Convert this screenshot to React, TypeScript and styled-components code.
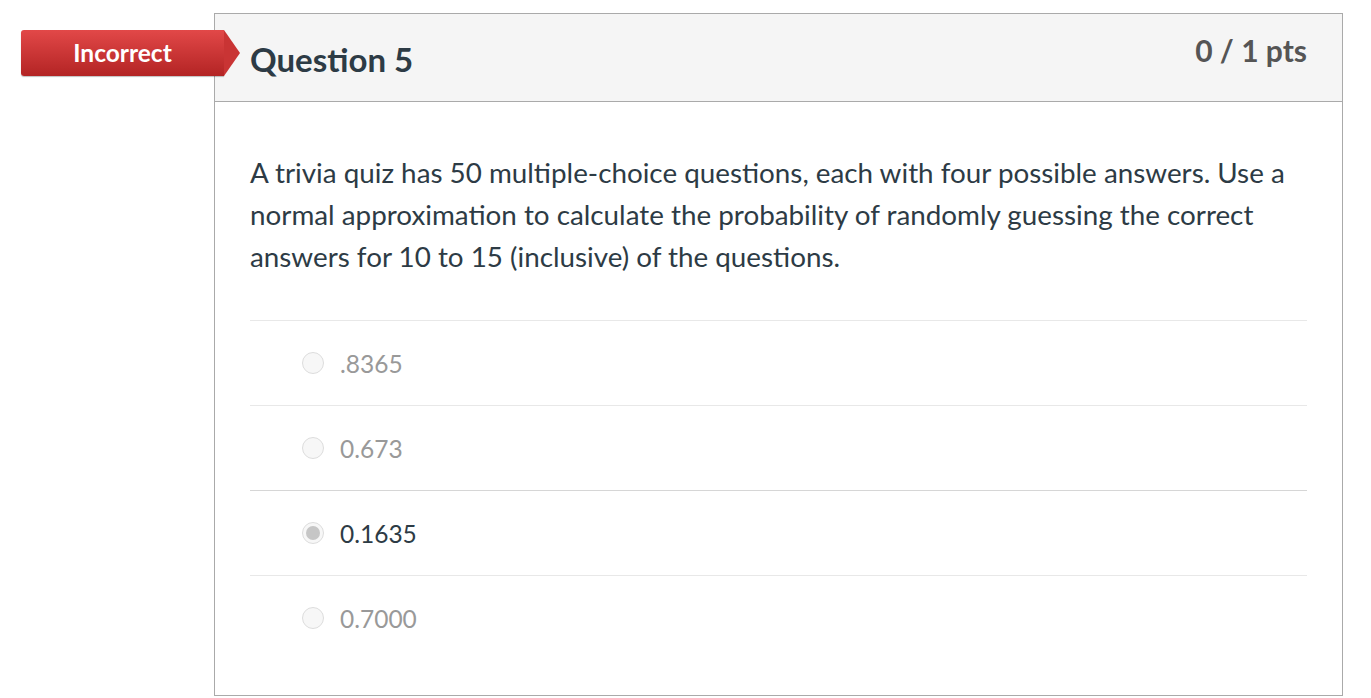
import React from "react";
import styled, {createGlobalStyle} from "styled-components";

const GlobalStyle = createGlobalStyle`
    body {
        margin: 0;
        background: #fff;
        font-family: Lato, "Open Sans", sans-serif;
    }
`;

const Page = styled.div`
    padding: 13px 0 0 214px;
`;

const Card = styled.div`
    position: relative;
    width: 1129px;
    height: 683px;
    box-sizing: border-box;
    border: 1px solid #aaa;
    background: #fff;
`;

const Header = styled.div`
    display: flex;
    justify-content: space-between;
    align-items: flex-start;
    height: 88px;
    box-sizing: border-box;
    padding: 0 35px 0 35px;
    background: #f5f5f5;
    border-bottom: 1px solid #aaa;
`;

const Title = styled.h2`
    margin: 25px 0 0 0;
    font-size: 33px;
    line-height: 40px;
    font-weight: 700;
    color: #2d3b45;
`;

const Points = styled.div`
    margin-top: 18px;
    font-size: 30px;
    line-height: 36px;
    font-weight: 700;
    color: #555;
`;

const Badge = styled.div`
    position: absolute;
    left: -194px;
    top: 16px;
    width: 203px;
    height: 46px;
    box-sizing: border-box;
    display: flex;
    align-items: center;
    justify-content: center;
    padding-bottom: 2px;
    background: linear-gradient(#e24848, #b32424);
    border-radius: 3px 0 0 3px;
    color: #fff;
    font-size: 24.5px;
    font-weight: 700;
    box-shadow: 0 1px 1px rgba(0, 0, 0, 0.25);

    &::after {
        content: "";
        position: absolute;
        right: -16px;
        top: 0;
        border-top: 23px solid transparent;
        border-bottom: 23px solid transparent;
        border-left: 16px solid #c93434;
    }
`;

const Body = styled.div`
    padding: 50px 35px 0 35px;
`;

const Text = styled.p`
    margin: 0 0 42px 0;
    font-size: 27.8px;
    line-height: 42px;
    color: #2d3b45;
`;

const AnswerRow = styled.div<{ $strong?: boolean }>`
    display: flex;
    align-items: center;
    gap: 16px;
    height: 84px;
    padding-left: 52px;
    border-top: 1px solid ${p => p.$strong ? "#d6d6d6" : "#e8e8e8"};
`;

const Radio = styled.span<{ $checked?: boolean }>`
    width: 22px;
    height: 22px;
    box-sizing: border-box;
    border-radius: 50%;
    border: 1px solid #ddd;
    background: #f7f7f7;
    display: flex;
    align-items: center;
    justify-content: center;

    &::after {
        content: "";
        display: ${p => p.$checked ? "block" : "none"};
        width: 14px;
        height: 14px;
        border-radius: 50%;
        background: #c6c6c6;
    }
`;

const AnswerText = styled.span<{ $checked?: boolean }>`
    font-size: 24.5px;
    color: ${p => p.$checked ? "#2d3b45" : "#999"};
`;

const answers = [
    {text: ".8365", checked: false},
    {text: "0.673", checked: false},
    {text: "0.1635", checked: true},
    {text: "0.7000", checked: false},
];

const App = () => {
    return (
        <Page>
            <GlobalStyle/>
            <Card>
                <Badge>Incorrect</Badge>
                <Header>
                    <Title>Question 5</Title>
                    <Points>0 / 1 pts</Points>
                </Header>
                <Body>
                    <Text>
                        A trivia quiz has 50 multiple-choice questions, each with four possible answers. Use a
                        normal approximation to calculate the probability of randomly guessing the correct
                        answers for 10 to 15 (inclusive) of the questions.
                    </Text>
                    {answers.map((a, i) => (
                        <AnswerRow key={a.text} $strong={i === 2}>
                            <Radio $checked={a.checked}/>
                            <AnswerText $checked={a.checked}>{a.text}</AnswerText>
                        </AnswerRow>
                    ))}
                </Body>
            </Card>
        </Page>
    );
};

export default App;
